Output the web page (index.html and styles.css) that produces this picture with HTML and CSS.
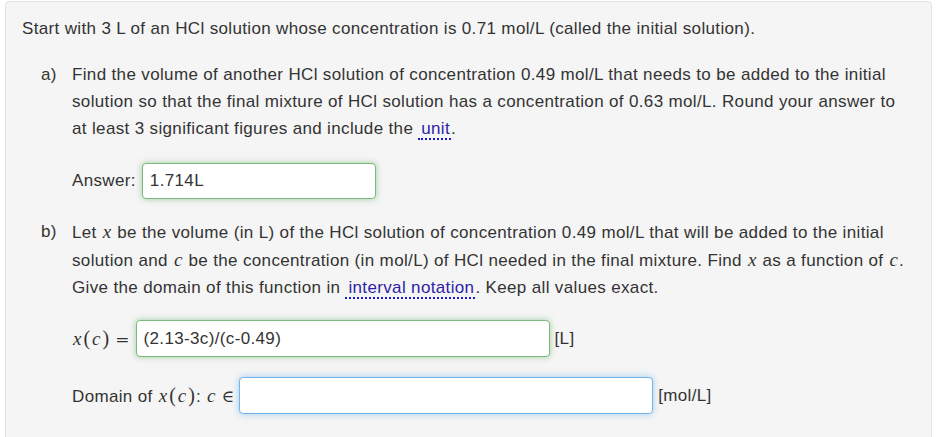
FILE: index.html
```html
<html>
<head>
  <meta charset="utf-8">
  <title>HCl solution</title>
  <link rel="stylesheet" href="styles.css">
</head>
<body>
  <div class="problem">
    <p class="intro">Start with 3 L of an HCl solution whose concentration is 0.71 mol/L (called the initial solution).</p>

    <div class="part">
      <div class="label">a)</div>
      <div class="body">
        <p>Find the volume of another HCl solution of concentration 0.49 mol/L that needs to be added to the initial solution so that the final mixture of HCl solution has a concentration of 0.63 mol/L. Round your answer to at least 3 significant figures and include the <a class="term" href="#">unit</a>.</p>
        <div class="row">
          <span>Answer:</span>
          <input class="field ok short" type="text" value="1.714L">
        </div>
      </div>
    </div>

    <div class="part">
      <div class="label">b)</div>
      <div class="body">
        <p>Let <i class="m">x</i> be the volume (in L) of the HCl solution of concentration 0.49 mol/L that will be added to the initial solution and <i class="m">c</i> be the concentration (in mol/L) of HCl needed in the final mixture. Find <i class="m">x</i> as a function of <i class="m">c</i>. Give the domain of this function in <a class="term" href="#">interval notation</a>. Keep all values exact.</p>
        <div class="row tight">
          <span class="math"><i class="m">x</i><span class="paren">(</span><i class="m">c</i><span class="paren">)</span> <span class="eq">=</span></span>
          <input class="field ok" type="text" value="(2.13-3c)/(c-0.49)">
          <span class="unit">[L]</span>
        </div>
        <div class="row">
          <span>Domain of <i class="m">x</i><span class="paren">(</span><i class="m">c</i><span class="paren">)</span>: <i class="m">c</i> <span class="eq">&isin;</span></span>
          <input class="field focus" type="text" value="">
          <span class="unit">[mol/L]</span>
        </div>
      </div>
    </div>
  </div>
</body>
</html>
```

FILE: styles.css
```css
body {
  margin: 0;
  padding: 1px 7px 0 5px;
  background-color: #fff;
  font-family: "Liberation Sans", Arial, sans-serif;
  font-size: 17px;
  letter-spacing: 0.35px;
  color: #333;
}

.problem {
  background-color: #f5f5f5;
  border: 1px solid #e3e3e3;
  border-radius: 4px;
  padding: 13px 20px 40px 16px;
  line-height: 27px;
}

.problem p {
  margin: 0;
}

.intro {
  margin-bottom: 19px !important;
}

.part {
  display: flex;
  margin-bottom: 19px;
}

.part .label {
  width: 31px;
  flex-shrink: 0;
  padding-left: 19px;
}

.part .body {
  flex: 1;
}

.row {
  display: flex;
  align-items: center;
  height: 37px;
  line-height: 20px;
  margin-top: 20px;
}

.row.tight {
  margin-top: 19px;
}

.field {
  height: 37px;
  box-sizing: border-box;
  width: 414px;
  margin: 0 5px 0 5px;
  padding: 0 7px;
  border: 1px solid #ccc;
  border-radius: 4px;
  background-color: #fff;
  font-family: "Liberation Sans", Arial, sans-serif;
  font-size: 17px;
  letter-spacing: 0.35px;
  color: #333;
  outline: none;
}

.field.short {
  width: 234px;
  height: 36px;
  margin-left: 6px;
}

.field.ok {
  border-color: #7fb87f;
  box-shadow: 0 0 6px rgba(92, 170, 92, 0.55);
}

.field.focus {
  border-color: #73b4ec;
  box-shadow: 0 0 7px rgba(102, 175, 233, 0.6);
}

.term {
  color: #2d1fa8;
  text-decoration: none;
  border-bottom: 2px dotted #1a1ad0;
  padding: 0 1px 0 3px;
  line-height: 18px;
  display: inline-block;
}

.m {
  font-family: "Liberation Serif", "DejaVu Serif", serif;
  font-style: italic;
  font-size: 19px;
  letter-spacing: 0;
  padding: 0 1px;
}

.paren {
  font-family: "Liberation Serif", "DejaVu Serif", serif;
  font-size: 20px;
  letter-spacing: 0;
  padding: 0 1px;
}

.eq {
  font-family: "DejaVu Serif", serif;
  font-size: 17px;
  letter-spacing: 0;
}

.math {
  padding-right: 1px;
}
```
